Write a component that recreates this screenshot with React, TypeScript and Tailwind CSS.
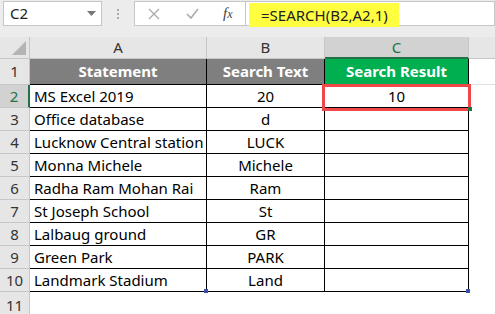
import React from 'react'

type Row = { n: number; a: string; b: string; c: string }

const rows: Row[] = [
  { n: 2, a: 'MS Excel 2019', b: '20', c: '10' },
  { n: 3, a: 'Office database', b: 'd', c: '' },
  { n: 4, a: 'Lucknow Central station', b: 'LUCK', c: '' },
  { n: 5, a: 'Monna Michele', b: 'Michele', c: '' },
  { n: 6, a: 'Radha Ram Mohan Rai', b: 'Ram', c: '' },
  { n: 7, a: 'St Joseph School', b: 'St', c: '' },
  { n: 8, a: 'Lalbaug ground', b: 'GR', c: '' },
  { n: 9, a: 'Green Park', b: 'PARK', c: '' },
  { n: 10, a: 'Landmark Stadium', b: 'Land', c: '' },
]

const font = { fontFamily: '"Noto Sans", "Open Sans", sans-serif' }

export default function App() {
  return (
    <div className="relative h-[314px] w-[495px] overflow-hidden bg-white text-[15px] text-black" style={font}>
      {/* ── Formula bar ── */}
      <div className="flex h-[37px] items-start gap-0 bg-[#ececec] pt-[1px]">
        <div className="ml-[3px] flex h-[25px] w-[99px] items-center justify-between border border-[#c6c6c6] bg-white pl-[6px] pr-[5px]">
          <span className="text-[15px] text-[#222]">C2</span>
          <svg width="9" height="5" viewBox="0 0 9 5"><path d="M0 0h9L4.5 5z" fill="#777" /></svg>
        </div>
        <div className="flex h-[25px] w-[32px] flex-col items-center justify-center gap-[2px]">
          <span className="h-[2px] w-[2px] bg-[#aaa]" />
          <span className="h-[2px] w-[2px] bg-[#aaa]" />
          <span className="h-[2px] w-[2px] bg-[#aaa]" />
        </div>
        <div className="flex h-[25px] w-[112px] items-center border border-[#c6c6c6] bg-white">
          <svg className="ml-[13px]" width="12" height="12" viewBox="0 0 12 12">
            <path d="M1 1l10 10M11 1L1 11" stroke="#aaa" strokeWidth="1.3" />
          </svg>
          <svg className="ml-[26px]" width="13" height="11" viewBox="0 0 13 11">
            <path d="M1 6l4 4 7-9" stroke="#aaa" strokeWidth="1.6" fill="none" />
          </svg>
          <span className="ml-[24px] text-[15px] italic text-[#444]" style={{ fontFamily: '"Liberation Serif", serif' }}>
            f<span className="text-[12px]">x</span>
          </span>
        </div>
        <div className="flex h-[25px] flex-1 items-center border-y border-r border-[#c6c6c6] bg-white pl-[3px]">
          <div className="mt-[3px] flex h-[24px] w-[150px] items-center bg-[#ffff40] pl-[12px] text-[15px] text-[#222]">
            =SEARCH(B2,A2,1)
          </div>
        </div>
      </div>

      {/* ── Column headers ── */}
      <div className="flex h-[22px] bg-[#e6e6e6] text-[15px] text-[#333]">
        <div className="relative w-[30px] border-r border-b border-[#c6c6c6]">
          <svg className="absolute bottom-[3px] right-[3px]" width="14" height="14" viewBox="0 0 14 14">
            <path d="M14 0v14H0z" fill="#b4b4b4" />
          </svg>
        </div>
        <div className="flex w-[177px] items-center justify-center border-r border-b border-[#c6c6c6]">A</div>
        <div className="flex w-[118px] items-center justify-center border-r border-b border-[#c6c6c6]">B</div>
        <div className="flex w-[144px] items-center justify-center border-r border-b-2 border-[#c6c6c6] border-b-[#217346] bg-[#d2d2d2] text-[#217346]">C</div>
        <div className="flex-1 border-b border-[#c6c6c6]" />
      </div>

      {/* ── Row 1 ── */}
      <div className="flex h-[26px]">
        <div className="flex w-[30px] items-center justify-center border-r border-b border-[#c6c6c6] bg-[#e6e6e6] text-[15px] text-[#333]">1</div>
        <div className="flex w-[177px] items-center justify-center border-r border-b border-black bg-[#7f7f7f] font-bold text-white">Statement</div>
        <div className="flex w-[118px] items-center justify-center border-r border-b border-black bg-[#7f7f7f] font-bold text-white">Search Text</div>
        <div className="flex w-[144px] items-center justify-center border-r border-b border-black bg-[#00b050] font-bold text-white">Search Result</div>
        <div className="flex-1 border-b border-[#e0e0e0]" />
      </div>

      {/* ── Data rows ── */}
      {rows.map((r) => (
        <div key={r.n} className="flex h-[23px]">
          <div
            className={
              r.n === 2
                ? 'flex w-[30px] items-center justify-center border-r-2 border-b border-[#c6c6c6] border-r-[#217346] bg-[#d2d2d2] text-[15px] text-[#217346]'
                : 'flex w-[30px] items-center justify-center border-r border-b border-[#c6c6c6] bg-[#e6e6e6] text-[15px] text-[#333]'
            }
          >
            {r.n}
          </div>
          <div className="relative flex w-[177px] items-center border-r border-b border-black pl-[4px]">
            {r.a}
            {r.n === 10 && <span className="absolute -bottom-[2px] -right-[2px] h-[4px] w-[4px] bg-[#3b4fa8]" />}
          </div>
          <div className="flex w-[118px] items-center justify-center border-r border-b border-black">{r.b}</div>
          <div className="relative flex w-[144px] items-center justify-center border-r border-b border-black">
            {r.c}
            {r.n === 10 && <span className="absolute -bottom-[2px] -right-[2px] h-[4px] w-[4px] bg-[#3b4fa8]" />}
          </div>
          <div className="flex-1" />
        </div>
      ))}

      {/* ── Row 11 ── */}
      <div className="flex h-[30px]">
        <div className="flex w-[30px] items-start justify-center border-r border-[#c6c6c6] bg-[#e6e6e6] pt-[2px] text-[15px] text-[#333]">11</div>
        <div className="flex-1" />
      </div>

      {/* ── Selection on C2 ── */}
      <div className="absolute left-[322px] top-[84px] h-[27px] w-[149px] border-[3px] border-[#f04848]" />
      <span className="absolute left-[468px] top-[107px] h-[4px] w-[4px] bg-[#217346]" />
    </div>
  )
}
